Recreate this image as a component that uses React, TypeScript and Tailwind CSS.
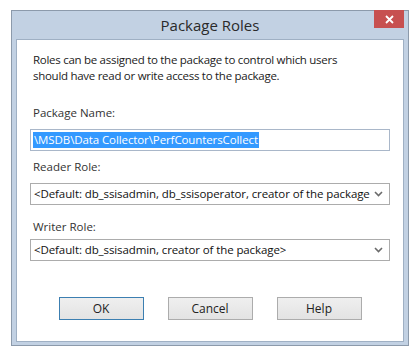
import React from "react";

const font = { fontFamily: '"Open Sans", "Noto Sans", sans-serif' };

function Chevron() {
  return (
    <svg width="9" height="6" viewBox="0 0 9 6" className="shrink-0">
      <path d="M1 1 L4.5 4.5 L8 1" stroke="#6b6b6b" strokeWidth="1.6" fill="none" />
    </svg>
  );
}

function Combo({ text }: { text: string }) {
  return (
    <div className="flex h-[22px] items-center justify-between border border-[#acacac] bg-white pl-[3px] pr-[6px]">
      <span className="truncate whitespace-nowrap text-[11.5px] text-[#111] tracking-[-0.1px]">{text}</span>
      <Chevron />
    </div>
  );
}

function Btn({ label, primary }: { label: string; primary?: boolean }) {
  return (
    <div
      className={
        "flex h-[23px] w-[85px] items-center justify-center border bg-[linear-gradient(#efefef,#e3e3e3)] text-[12px] text-[#222] " +
        (primary ? "border-[#3c7fb1]" : "border-[#acacac]")
      }
    >
      {label}
    </div>
  );
}

export default function App() {
  return (
    <div className="h-[355px] w-[419px] bg-white" style={font}>
      <div className="ml-[11px] pt-[10px]">
        <div className="flex h-[336px] w-[398px] flex-col border border-[#8c9aab] bg-[#c2d1e3]">
          <div className="relative flex h-[28px] shrink-0 items-center justify-center">
            <span className="text-[15px] text-[#2a2a2a]">Package Roles</span>
            <div className="absolute right-[4px] top-[-1px] flex h-[18px] w-[30px] items-center justify-center bg-[#c75050]">
              <svg width="9" height="9" viewBox="0 0 9 9">
                <path d="M1 1 L8 8 M8 1 L1 8" stroke="white" strokeWidth="1.8" />
              </svg>
            </div>
          </div>
          <div className="mx-[4px] mb-[3px] flex flex-1 flex-col border border-[#9fb0c4] bg-white pl-[13px] pr-[13px]">
            <p className="mt-[12px] pl-[3px] text-[11.5px] leading-[16px] text-[#222] tracking-[-0.28px]">
              Roles can be assigned to the package to control which users
              <br />
              should have read or write access to the package.
            </p>
            <div className="mt-[21px] pl-[3px] text-[11.5px] leading-[16px] text-[#333]">Package Name:</div>
            <div className="mt-[8px] flex h-[22px] items-center border border-[#a9b7c9] bg-white pl-[2px]">
              <span className="bg-[#3399ff] px-[1px] text-[11.5px] leading-[16px] text-white tracking-[-0.1px]">
                \MSDB\Data Collector\PerfCountersCollect
              </span>
            </div>
            <div className="mt-[8px] pl-[3px] text-[11.5px] leading-[16px] text-[#333]">Reader Role:</div>
            <div className="mt-[8px]">
              <Combo text="<Default: db_ssisadmin, db_ssisoperator, creator of the package" />
            </div>
            <div className="mt-[14px] pl-[3px] text-[11.5px] leading-[16px] text-[#333]">Writer Role:</div>
            <div className="mt-[4px]">
              <Combo text="<Default: db_ssisadmin, creator of the package>" />
            </div>
            <div className="mt-[36px] flex justify-center gap-[24px]">
              <Btn label="OK" primary />
              <Btn label="Cancel" />
              <Btn label="Help" />
            </div>
          </div>
        </div>
      </div>
    </div>
  );
}
